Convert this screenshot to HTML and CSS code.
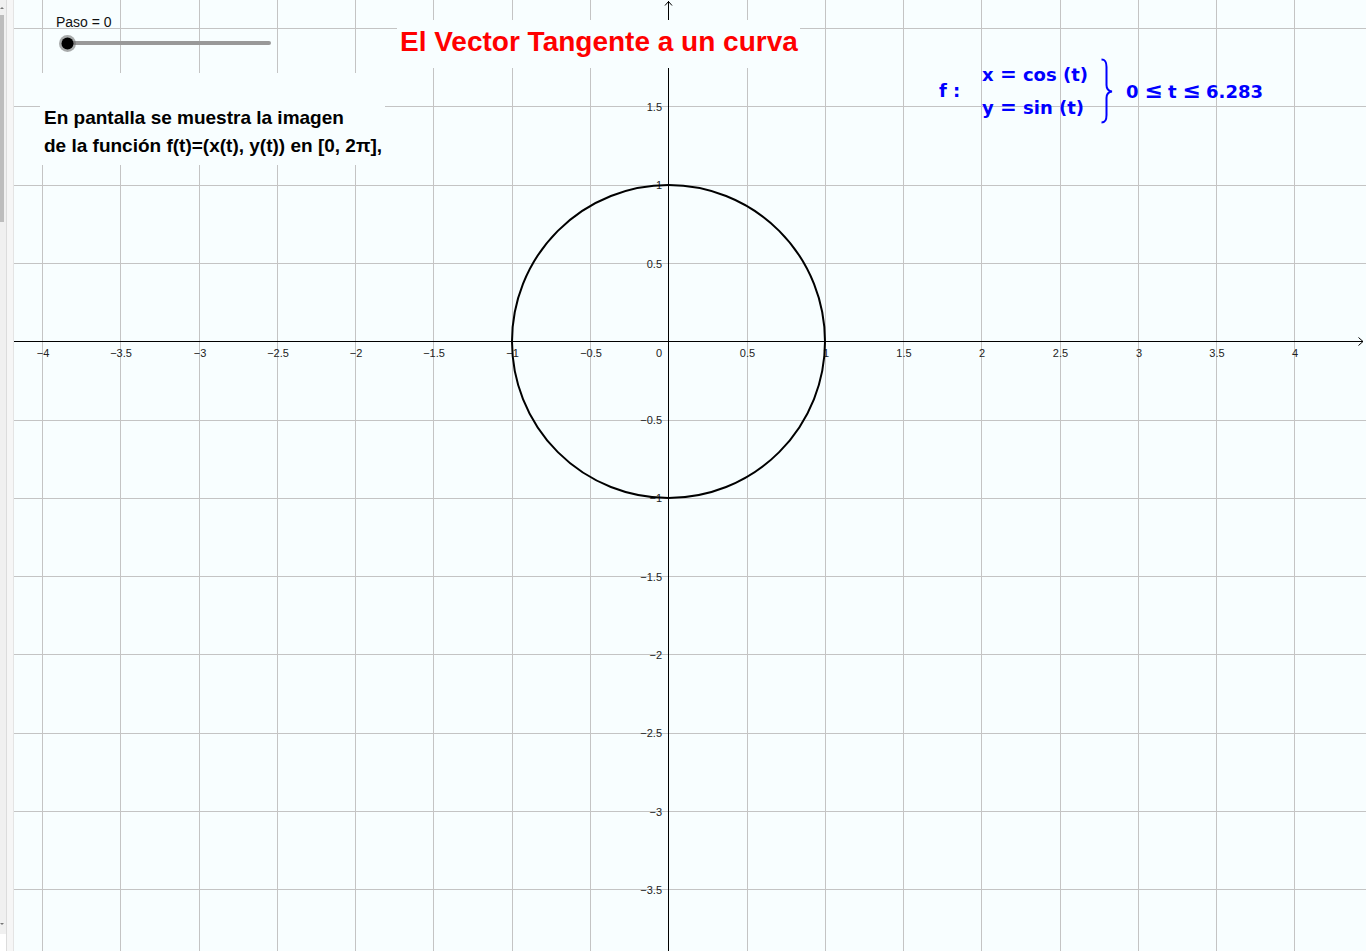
FILE: index.html
```html
<!DOCTYPE html>
<html lang="es">
<head>
<meta charset="utf-8">
<title>El Vector Tangente a un curva</title>
<link rel="stylesheet" href="styles.css">
</head>
<body>
<div class="app">
  <div class="scrollbar">
    <span class="scroll-arrow up"></span>
    <div class="thumb"></div>
    <span class="scroll-arrow down"></span>
  </div>
  <div class="sep"></div>
  <div class="gutter"></div>
  <div class="sep light"></div>
  <div class="canvas">
    <svg class="plot" width="1352" height="951" viewBox="0 0 1352 951" xmlns="http://www.w3.org/2000/svg">
      <g transform="translate(-14 0)">
        <g class="grid">
          <line x1="42.5" y1="0" x2="42.5" y2="951"/>
          <line x1="120.5" y1="0" x2="120.5" y2="951"/>
          <line x1="199.5" y1="0" x2="199.5" y2="951"/>
          <line x1="277.5" y1="0" x2="277.5" y2="951"/>
          <line x1="355.5" y1="0" x2="355.5" y2="951"/>
          <line x1="433.5" y1="0" x2="433.5" y2="951"/>
          <line x1="512.5" y1="0" x2="512.5" y2="951"/>
          <line x1="590.5" y1="0" x2="590.5" y2="951"/>
          <line x1="747.5" y1="0" x2="747.5" y2="951"/>
          <line x1="825.5" y1="0" x2="825.5" y2="951"/>
          <line x1="903.5" y1="0" x2="903.5" y2="951"/>
          <line x1="981.5" y1="0" x2="981.5" y2="951"/>
          <line x1="1060.5" y1="0" x2="1060.5" y2="951"/>
          <line x1="1138.5" y1="0" x2="1138.5" y2="951"/>
          <line x1="1216.5" y1="0" x2="1216.5" y2="951"/>
          <line x1="1294.5" y1="0" x2="1294.5" y2="951"/>
          <line x1="14" y1="28.5" x2="1366" y2="28.5"/>
          <line x1="14" y1="106.5" x2="1366" y2="106.5"/>
          <line x1="14" y1="185.5" x2="1366" y2="185.5"/>
          <line x1="14" y1="263.5" x2="1366" y2="263.5"/>
          <line x1="14" y1="420.5" x2="1366" y2="420.5"/>
          <line x1="14" y1="498.5" x2="1366" y2="498.5"/>
          <line x1="14" y1="576.5" x2="1366" y2="576.5"/>
          <line x1="14" y1="654.5" x2="1366" y2="654.5"/>
          <line x1="14" y1="733.5" x2="1366" y2="733.5"/>
          <line x1="14" y1="811.5" x2="1366" y2="811.5"/>
          <line x1="14" y1="889.5" x2="1366" y2="889.5"/>
        </g>
        <g class="axes">
          <line x1="14" y1="341.5" x2="1363" y2="341.5"/>
          <polyline points="1358.5,337.5 1363,341.5 1358.5,345.5"/>
          <line x1="668.5" y1="1" x2="668.5" y2="951"/>
          <polyline points="665,5.5 668.5,1.5 672,5.5"/>
        </g>
        <g class="xlabels">
          <text x="43" y="357">−4</text>
          <text x="121" y="357">−3.5</text>
          <text x="200" y="357">−3</text>
          <text x="278" y="357">−2.5</text>
          <text x="356" y="357">−2</text>
          <text x="434" y="357">−1.5</text>
          <text x="512.5" y="357">−1</text>
          <text x="591" y="357">−0.5</text>
          <text x="747.5" y="357">0.5</text>
          <text x="826" y="357">1</text>
          <text x="904" y="357">1.5</text>
          <text x="982" y="357">2</text>
          <text x="1060.5" y="357">2.5</text>
          <text x="1139" y="357">3</text>
          <text x="1217" y="357">3.5</text>
          <text x="1295" y="357">4</text>
        </g>
        <g class="ylabels">
          <text x="662" y="357">0</text>
          <text x="662" y="110.5">1.5</text>
          <text x="662" y="189">1</text>
          <text x="662" y="267.5">0.5</text>
          <text x="662" y="424">−0.5</text>
          <text x="662" y="502">−1</text>
          <text x="662" y="580.5">−1.5</text>
          <text x="662" y="658.5">−2</text>
          <text x="662" y="737">−2.5</text>
          <text x="662" y="815.5">−3</text>
          <text x="662" y="893.5">−3.5</text>
        </g>
        <circle class="curve" cx="668.5" cy="341.5" r="156.5"/>
        <text class="slider-label" x="56" y="27">Paso = 0</text>
        <line class="slider-track" x1="67" y1="43" x2="269" y2="43"/>
        <circle class="slider-halo" cx="67.5" cy="43.5" r="8.5"/>
        <circle class="slider-knob" cx="67.5" cy="43.5" r="6"/>
      </g>
    </svg>

    <div class="title-box">El Vector Tangente a un curva</div>

    <div class="info-box">
      <p>En pantalla se muestra la imagen</p>
      <p>de la función f(t)=(x(t), y(t)) en [0, 2π],</p>
    </div>

    <div class="formula">
      <span class="f-name">f&nbsp;:</span>
      <span class="rows">
        <span class="row">x <span class="eq">=</span> cos (t)</span>
        <span class="row">y <span class="eq">=</span> sin (t)</span>
      </span>
      <svg class="brace" width="14" height="66" viewBox="0 0 14 66" xmlns="http://www.w3.org/2000/svg">
        <path d="M1.5,1.5 C5.5,1.5 6.5,4 6.5,9 L6.5,27 C6.5,31 8,33 12,33.5 C8,34 6.5,36 6.5,40 L6.5,57 C6.5,62 5.5,64.5 1.5,64.5"/>
      </svg>
      <span class="interval">0<span class="le">≤</span>t<span class="le">≤</span>6.283</span>
    </div>
  </div>
</div>
</body>
</html>
```

FILE: styles.css
```css
html, body {
  margin: 0;
  padding: 0;
  background: #ffffff;
}

.app {
  display: flex;
  width: 1366px;
  height: 951px;
  overflow: hidden;
  font-family: "Liberation Sans", Arial, sans-serif;
}

.scrollbar {
  position: relative;
  width: 6px;
  height: 934px;
  background: #f0f0f0;
  flex: none;
}

.thumb {
  position: absolute;
  left: 0;
  top: 15px;
  width: 4px;
  height: 207px;
  background: #bdbdbd;
}

.scroll-arrow {
  position: absolute;
  left: 0;
  width: 0;
  height: 0;
  border-left: 2px solid transparent;
  border-right: 2px solid transparent;
}

.scroll-arrow.up {
  top: 7px;
  border-bottom: 2px solid #777;
}

.scroll-arrow.down {
  top: 923px;
  border-top: 2px solid #777;
}

.sep {
  width: 1px;
  background: #dcdcdc;
  flex: none;
}

.sep.light {
  background: #e4e4e4;
}

.gutter {
  width: 6px;
  background: #f6f6f6;
  flex: none;
}

.canvas {
  position: relative;
  flex: 1;
  height: 951px;
  background: #f8feff;
}

.plot {
  display: block;
}

.grid line {
  stroke: #c4c4c4;
  stroke-width: 1;
}

.axes line,
.axes polyline {
  stroke: #000;
  stroke-width: 1;
  fill: none;
}

.xlabels text,
.ylabels text {
  font-family: "Liberation Sans", Arial, sans-serif;
  font-size: 11px;
  fill: #222;
}

.xlabels text {
  text-anchor: middle;
}

.ylabels text {
  text-anchor: end;
}

.curve {
  fill: none;
  stroke: #000;
  stroke-width: 2;
}

.slider-label {
  font-family: "Liberation Sans", Arial, sans-serif;
  font-size: 14px;
  fill: #111;
}

.slider-track {
  stroke: #999;
  stroke-width: 4;
  stroke-linecap: round;
}

.slider-halo {
  fill: #666;
  opacity: 0.55;
}

.slider-knob {
  fill: #000;
}

.title-box {
  position: absolute;
  left: 383px;
  top: 20px;
  width: 400px;
  height: 32px;
  padding: 6px 0 10px 3px;
  background: #f8feff;
  color: #ff0000;
  font-weight: bold;
  font-size: 28px;
  line-height: 32px;
  white-space: nowrap;
}

.info-box {
  position: absolute;
  left: 26px;
  top: 73px;
  width: 341px;
  padding: 31px 0 5px 4px;
  background: #f8feff;
  color: #000;
  font-weight: bold;
  font-size: 19px;
  line-height: 28px;
  white-space: nowrap;
}

.info-box p {
  margin: 0;
}

.formula {
  position: absolute;
  left: 925px;
  top: 58px;
  height: 66px;
  display: flex;
  align-items: center;
  color: #0000ff;
  font-family: "DejaVu Sans", sans-serif;
  font-weight: bold;
  font-size: 18px;
  line-height: 32px;
  white-space: nowrap;
}

.f-name {
  width: 43px;
}

.rows {
  display: flex;
  flex-direction: column;
  width: 118px;
}

.eq {
  font-size: 20px;
}

.brace {
  display: block;
  flex: none;
}

.brace path {
  fill: none;
  stroke: #0000ff;
  stroke-width: 2;
}

.interval {
  margin-left: 12px;
}

.le {
  font-size: 22px;
  margin: 0 5px 0 6px;
}
```
